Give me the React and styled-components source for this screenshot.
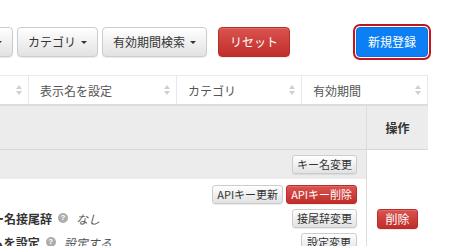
import React from 'react';
import styled, { createGlobalStyle, css } from 'styled-components';

const GlobalStyle = createGlobalStyle`
    html, body {
        margin: 0;
        padding: 0;
        background: #fff;
    }
    body {
        font-family: "Noto Sans CJK JP", "Noto Sans", sans-serif;
        color: #333;
        overflow: hidden;
    }
`;

const FONT = '"Noto Sans CJK JP", "Noto Sans", sans-serif';

const Page = styled.div`
    width: 451px;
    height: 246px;
    overflow: hidden;
    padding-top: 27px;
    box-sizing: border-box;
`;

const Toolbar = styled.div`
    display: flex;
    align-items: center;
    height: 30px;
    margin-left: -57px;
    padding-right: 23px;
`;

const variants = {
    default: css`
        color: #333;
        border-color: #ccc;
        background: linear-gradient(#fff, #e2e2e2);
        box-shadow: inset 0 1px 0 rgba(255, 255, 255, 0.2), 0 1px 1px rgba(0, 0, 0, 0.08);
    `,
    danger: css`
        color: #fff;
        border-color: #b92c28;
        background: linear-gradient(#d9534f, #c12e2a);
        box-shadow: inset 0 1px 0 rgba(255, 255, 255, 0.15), 0 1px 1px rgba(0, 0, 0, 0.08);
    `,
    primary: css`
        color: #fff;
        border-color: #0b72e0;
        background: #0c7ff5;
        box-shadow: 0 0 0 1px #fff, 0 0 0 3px #c4151c;
    `,
};

const Button = styled.button`
    display: inline-flex;
    align-items: center;
    justify-content: center;
    box-sizing: border-box;
    height: 30px;
    padding: 0 ${({ $dropdown }) => ($dropdown ? 10 : 11)}px;
    margin-left: ${({ $gap }) => $gap || 0}px;
    font: 12px/1 ${FONT};
    border: 1px solid;
    border-radius: 4px;
    white-space: nowrap;
    flex-shrink: 0;
    ${({ $variant }) => variants[$variant || 'default']}
`;

const CutButton = styled(Button)`
    width: 70px;
    justify-content: flex-end;
`;

const PushRight = styled.div`
    margin-left: auto;
    display: flex;
`;

const Caret = styled.span`
    display: inline-block;
    width: 0;
    height: 0;
    margin-left: 5px;
    border-top: 3px solid #333;
    border-left: 3px solid transparent;
    border-right: 3px solid transparent;
`;

const Table = styled.div`
    margin: 18px 23px 0 -71px;
`;

const HeaderRow = styled.div`
    display: grid;
    grid-template-columns: 100px 148px 125px 126px;
    height: 31px;
    box-sizing: border-box;
    background: #fff;
    border-top: 1px solid #e9e9e9;
    border-bottom: 2px solid #dcdcdc;
`;

const HeaderCell = styled.div`
    display: flex;
    align-items: center;
    justify-content: space-between;
    padding: 0 6px 0 11px;
    border-right: 1px solid #e8e8e8;
    font-size: 12px;
    color: #555;
    white-space: nowrap;
`;

const SortIcon = () => (
    <svg width="6" height="10" viewBox="0 0 6 10">
        <path d="M3 0 L6 4 H0 Z" fill="#cfcfcf" />
        <path d="M0 6 H6 L3 10 Z" fill="#cfcfcf" />
    </svg>
);

const Detail = styled.div`
    display: grid;
    grid-template-columns: 1fr 62px;
    background: #ececec;
`;

const DetailHead = styled.div`
    height: 44px;
    box-sizing: border-box;
    border-bottom: 1px solid #d7d7d7;
    display: flex;
    align-items: center;
    justify-content: center;
    font-size: 12px;
    font-weight: bold;
    color: #333;
    ${({ $side }) => $side && css`
        border-left: 1px solid #dcdcdc;
    `}
`;

const KeyCell = styled.div`
    display: flex;
    flex-direction: column;
`;

const KeyRow = styled.div`
    height: 29px;
    display: flex;
    align-items: center;
    justify-content: flex-end;
    padding-right: 9px;
    background: #ececec;
`;

const KeyBody = styled.div`
    background: #fff;
    padding: 5px 9px 0 51px;
    display: flex;
    flex-direction: column;
    gap: 4px;
`;

const SubRow = styled.div`
    height: 20px;
    display: flex;
    align-items: center;
    justify-content: space-between;
`;

const Label = styled.div`
    display: flex;
    align-items: center;
    font-size: 12px;
    white-space: nowrap;
`;

const LabelName = styled.span`
    font-weight: bold;
    color: #333;
`;

const Help = styled.span`
    display: inline-flex;
    align-items: center;
    justify-content: center;
    width: 10px;
    height: 10px;
    margin: 0 8px 0 6px;
    border-radius: 50%;
    background: #adadad;
    color: #fff;
    font: bold 8px/1 "Liberation Sans", sans-serif;
`;

const Value = styled.span`
    font-style: italic;
    color: #555;
`;

const Actions = styled.div`
    display: flex;
    gap: 3px;
`;

const SmallButton = styled.button`
    display: inline-flex;
    align-items: center;
    justify-content: center;
    box-sizing: border-box;
    height: 19px;
    padding: 0 ${({ $pad }) => $pad || 4}px;
    font: ${({ $size }) => $size || 11}px/1 ${FONT};
    border: 1px solid;
    border-radius: 3px;
    white-space: nowrap;
    ${({ $variant }) => variants[$variant || 'default']}
`;

const OpCell = styled.div`
    background: #fff;
    border-left: 1px solid #dcdcdc;
    display: flex;
    justify-content: center;
    align-items: flex-start;
    padding-top: 59px;
`;

const DeleteButton = styled(SmallButton)`
    height: 20px;
`;

const columns = ['', '表示名を設定', 'カテゴリ', '有効期間'];

const App = () => (
    <Page>
        <GlobalStyle />
        <Toolbar>
            <CutButton $dropdown>
                ステータス
                <Caret />
            </CutButton>
            <Button $dropdown $gap={4}>
                カテゴリ
                <Caret />
            </Button>
            <Button $dropdown $gap={4}>
                有効期間検索
                <Caret />
            </Button>
            <Button $variant="danger" $gap={11}>リセット</Button>
            <PushRight>
                <Button $variant="primary">新規登録</Button>
            </PushRight>
        </Toolbar>
        <Table>
            <HeaderRow>
                {columns.map((name, i) => (
                    <HeaderCell key={i}>
                        <span>{name}</span>
                        <SortIcon />
                    </HeaderCell>
                ))}
            </HeaderRow>
            <Detail>
                <DetailHead />
                <DetailHead $side>操作</DetailHead>
                <KeyCell>
                    <KeyRow>
                        <SmallButton>キー名変更</SmallButton>
                    </KeyRow>
                    <KeyBody>
                        <SubRow>
                            <span />
                            <Actions>
                                <SmallButton>APIキー更新</SmallButton>
                                <SmallButton $variant="danger">APIキー削除</SmallButton>
                            </Actions>
                        </SubRow>
                        <SubRow>
                            <Label>
                                <LabelName>キー名接尾辞</LabelName>
                                <Help>?</Help>
                                <Value>なし</Value>
                            </Label>
                            <SmallButton>接尾辞変更</SmallButton>
                        </SubRow>
                        <SubRow>
                            <Label>
                                <LabelName>テムを設定</LabelName>
                                <Help>?</Help>
                                <Value>設定する</Value>
                            </Label>
                            <SmallButton $pad={5}>設定変更</SmallButton>
                        </SubRow>
                    </KeyBody>
                </KeyCell>
                <OpCell>
                    <DeleteButton $variant="danger" $size={12} $pad={7}>削除</DeleteButton>
                </OpCell>
            </Detail>
        </Table>
    </Page>
);

export default App;
